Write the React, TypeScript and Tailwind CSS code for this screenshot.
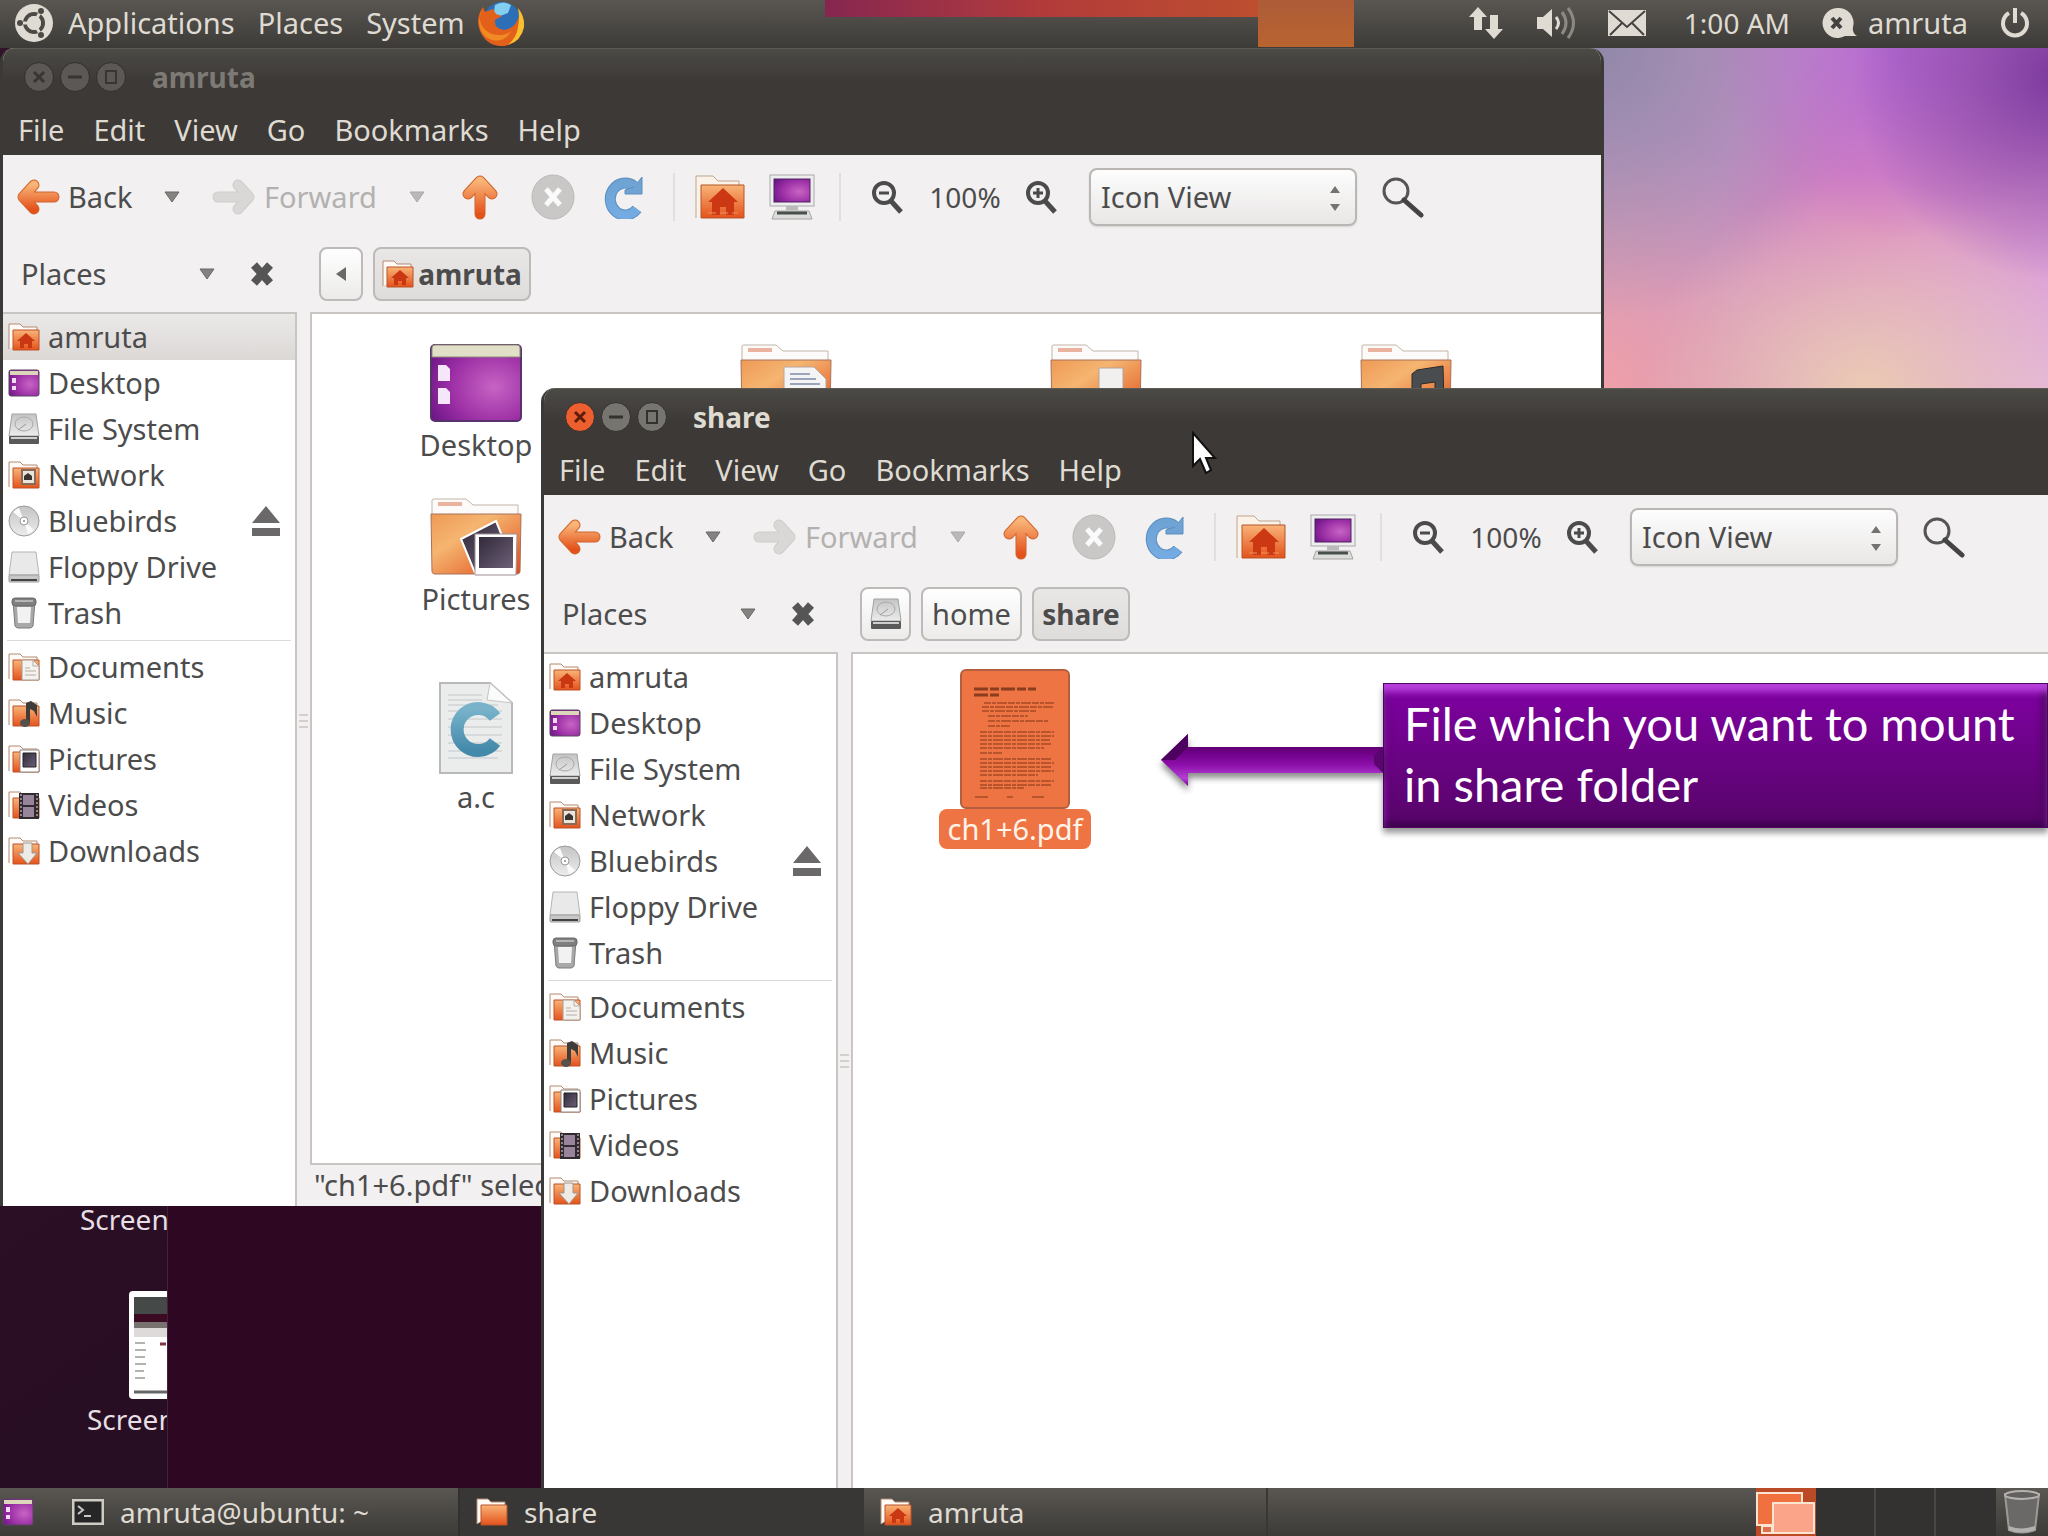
import React from 'react';

type IconProps = { className?: string };
type Emblem = 'home' | 'network' | 'document' | 'music' | 'picture' | 'video' | 'download' | 'none';

// Gradients shared by all the icons on the page
const Gradients = () => (
  <svg className="absolute h-0 w-0" aria-hidden="true">
    <defs>
      <linearGradient id="orange" x1="0" y1="0" x2="0" y2="1">
        <stop offset="0" stopColor="#f9b478" />
        <stop offset="1" stopColor="#e4521b" />
      </linearGradient>
      <linearGradient id="folder" x1="0" y1="0" x2="1" y2="1">
        <stop offset="0" stopColor="#ee9a55" />
        <stop offset="0.35" stopColor="#f5b571" />
        <stop offset="1" stopColor="#df4a17" />
      </linearGradient>
      <linearGradient id="blue" x1="0" y1="0" x2="0" y2="1">
        <stop offset="0" stopColor="#6ea3d4" />
        <stop offset="1" stopColor="#74abe2" />
      </linearGradient>
      <radialGradient id="purple" cx="0.7" cy="0.55" r="0.8">
        <stop offset="0" stopColor="#c764c4" />
        <stop offset="0.6" stopColor="#9c2fa5" />
        <stop offset="1" stopColor="#6d1687" />
      </radialGradient>
      <linearGradient id="metal" x1="0" y1="0" x2="0" y2="1">
        <stop offset="0" stopColor="#c4c4c4" />
        <stop offset="1" stopColor="#ececec" />
      </linearGradient>
      <linearGradient id="photo" x1="0" y1="0" x2="1" y2="1">
        <stop offset="0" stopColor="#322a3a" />
        <stop offset="1" stopColor="#6d6078" />
      </linearGradient>
      <linearGradient id="teal" x1="0" y1="0" x2="0" y2="1">
        <stop offset="0" stopColor="#79b3cb" />
        <stop offset="1" stopColor="#4389aa" />
      </linearGradient>
      <linearGradient id="shaft" x1="0" y1="0" x2="0" y2="1">
        <stop offset="0" stopColor="#43004f" />
        <stop offset="0.35" stopColor="#6d0085" />
        <stop offset="0.6" stopColor="#8d10ab" />
        <stop offset="0.85" stopColor="#b43fd4" />
        <stop offset="1" stopColor="#75058f" />
      </linearGradient>
    </defs>
  </svg>
);

const SmallFolder = ({ emblem }: { emblem: Emblem }) => (
  <svg viewBox="0 0 32 32" className="h-8 w-8 shrink-0">
    <path d="M1 28V3h11l3 3h14v5" fill="#fffaf5" stroke="#b08a74" />
    <path d="M5 9h26v20H5z" fill="url(#orange)" stroke="#b9532a" />
    {emblem === 'home' && <path d="M18 12l9 8h-3v7h-4v-4h-4v4h-4v-7H9z" fill="#c93713" />}
    {emblem === 'network' && (
      <>
        <path d="M14 11h13v14H14z" fill="#e9e5dc" stroke="#8b6a55" strokeWidth="2" />
        <path d="M16 21v-4l4-3 4 3v4z" fill="#38342f" />
      </>
    )}
    {emblem === 'document' && (
      <>
        <path d="M14 9h11l6 6v14H14z" fill="#f4f2ef" stroke="#a99a90" />
        <path d="M25 9v6h6M17 17h5M17 20h11M17 24h11" fill="none" stroke="#b7aaa2" />
      </>
    )}
    {emblem === 'music' && (
      <>
        <path d="M18 25V6l5-2 6 4v12l-3-6-4-2v14z" fill="#3f3d39" />
        <ellipse cx="17" cy="26" rx="5" ry="4" fill="#54524b" />
      </>
    )}
    {emblem === 'picture' && (
      <>
        <path d="M12 7h19v22H12z" fill="#fff" stroke="#8e8580" />
        <path d="M15 10h13v14H15z" fill="url(#photo)" stroke="#222" />
      </>
    )}
    {emblem === 'video' && (
      <>
        <path d="M11 4h20v26H11z" fill="#332a30" />
        <path d="M15 6h11v10H15zM15 18h11v10H15z" fill="#98859c" />
        <path d="M13 5v24M29 5v24" stroke="#8f858d" strokeWidth="2" strokeDasharray="2 2" />
      </>
    )}
    {emblem === 'download' && (
      <path d="M15 8h9v10h5l-9 11-10-11h5z" fill="#eeebe6" stroke="#a0968c" />
    )}
  </svg>
);

const DesktopIcon = () => (
  <svg viewBox="0 0 32 32" className="h-8 w-8 shrink-0">
    <rect x="1" y="3" width="30" height="26" rx="2" fill="url(#purple)" stroke="#5a4560" />
    <path d="M2 4h28v4H2z" fill="#dcd6ba" />
    <path d="M4 11h4v5H4zM4 19h4v4H4z" fill="#f2daf5" />
  </svg>
);

const DriveIcon = () => (
  <svg viewBox="0 0 32 32" className="h-8 w-8 shrink-0">
    <path d="M4 1h24l3 22H1z" fill="url(#metal)" stroke="#a2a2a2" />
    <ellipse cx="16" cy="11" rx="9" ry="7" fill="none" stroke="#a8a8a8" />
    <path d="M10 17l8-6" stroke="#999" />
    <rect x="1" y="23" width="30" height="8" rx="1" fill="#5a5a5a" />
    <path d="M3 25h26" stroke="#cfcfcf" strokeWidth="2" />
  </svg>
);

const FloppyIcon = () => (
  <svg viewBox="0 0 32 32" className="h-8 w-8 shrink-0">
    <path d="M4 1h24l3 23H1z" fill="#e9e9e9" stroke="#b5b5b5" />
    <rect x="1" y="24" width="30" height="7" rx="1" fill="#c7c7c7" stroke="#9c9c9c" />
    <path d="M3 29h26" stroke="#444" strokeWidth="2" />
  </svg>
);

const DiscIcon = () => (
  <svg viewBox="0 0 32 32" className="h-8 w-8 shrink-0">
    <circle cx="16" cy="16" r="15" fill="url(#metal)" stroke="#9b9b9b" />
    <path d="M16 16L5 7a14 14 0 0 1 6-4zM16 16l10 9a14 14 0 0 1-6 4z" fill="#fafafa" />
    <circle cx="16" cy="16" r="4" fill="#fff" stroke="#999" />
    <circle cx="16" cy="16" r="1" fill="#888" />
  </svg>
);

const TrashIcon = ({ className = 'h-8 w-8 shrink-0' }: IconProps) => (
  <svg viewBox="0 0 32 32" className={className}>
    <path d="M5 4h22l-2 25a4 3 0 0 1-3 2H10a4 3 0 0 1-3-2z" fill="#a8a8a8" stroke="#7c7c7c" />
    <path d="M9 10h14l-1 16H10z" fill="#f2f2f2" />
    <rect x="4" y="1" width="24" height="8" rx="3" fill="#7f7f7f" stroke="#6b6b6b" />
    <path d="M7 4h18" stroke="#b5b5b5" strokeWidth="2" />
  </svg>
);

const BigFolder = ({ emblem }: { emblem: Emblem }) => (
  <svg viewBox="0 0 92 78" className="h-[78px] w-[92px]">
    <path d="M2 20V2a2 2 0 0 1 2-1h32l7 6h45v14" fill="#fdfbf9" stroke="#c3b4a8" />
    <path d="M8 6h24" stroke="#eab3a0" strokeWidth="4" />
    <path d="M1 16h90l-1 58a3 3 0 0 1-3 2H5a3 3 0 0 1-3-2z" fill="url(#folder)" stroke="#a9725a" />
    {emblem === 'picture' && (
      <>
        <path d="M31 41l35-18 9 22-30 30z" fill="url(#photo)" stroke="#fff" strokeWidth="2" />
        <path d="M45 36h42l-1 41H45z" fill="#fff" stroke="#9b8f96" />
        <path d="M49 39h34v31H49z" fill="url(#photo)" />
      </>
    )}
    {emblem === 'document' && (
      <>
        <path d="M44 23h30l12 12v40H44z" fill="#f5f4f5" stroke="#b7a6a0" />
        <path d="M50 30h20M50 35h26M50 40h30M50 45h30" stroke="#9aa5ba" strokeWidth="2" />
      </>
    )}
    {emblem === 'download' && <path d="M49 24h24v24h12L61 72 37 48h12z" fill="#f2f0ee" stroke="#b1a49c" />}
    {emblem === 'music' && (
      <path d="M52 66V30l5-4 26-4 1 38-9 2V38l-14 2v26z" fill="#4a4d50" stroke="#2c2a28" />
    )}
  </svg>
);

const BigDesktop = () => (
  <svg viewBox="0 0 92 78" className="h-[78px] w-[92px]">
    <rect x="1" y="1" width="90" height="76" rx="4" fill="url(#purple)" stroke="#56336b" strokeWidth="2" />
    <path d="M2 4a3 3 0 0 1 3-3h82a3 3 0 0 1 3 3v9H2z" fill="#e2dfc8" stroke="#8d8a78" />
    <path d="M8 21h8l4 4v12H8zM8 44h8l4 4v12H8z" fill="#f6e6fa" />
  </svg>
);

const SourceFile = () => (
  <svg viewBox="0 0 74 92" className="h-[92px] w-[74px]">
    <path d="M1 1h50l22 20v70H1z" fill="#ebecec" stroke="#b9b9b9" strokeWidth="2" />
    <path d="M51 1l-3 17 25 3z" fill="#fbfbfb" stroke="#c5c5c5" />
    <path d="M9 13h34M9 18h34M9 23h50M9 29h54M9 37h54M9 45h54M9 53h54M9 61h54M9 69h54M9 76h50" stroke="#c3c8ca" />
    <path d="M56 35A21 21 0 1 0 56 60" fill="none" stroke="url(#teal)" strokeWidth="13" />
  </svg>
);

const PdfPreview = () => (
  <svg viewBox="0 0 110 140" className="h-[140px] w-[110px]">
    <rect x="1" y="1" width="108" height="138" rx="5" fill="#ef7443" stroke="#b35f3e" strokeWidth="2" />
    <path d="M14 20h62M14 26h27" stroke="#8a3d1f" strokeWidth="3" strokeDasharray="14 2 9 2" />
    <path
      d="M24 34h70M22 38h72M22 42h54M28 47h40M28 52h60M28 57h22M20 63h74M20 67h74M20 71h70M20 75h72M20 79h64M20 84h22M20 90h72M20 94h74M20 98h72M20 102h74M20 106h58M20 112h74M20 116h72M20 119h44"
      stroke="#b9552c"
      strokeWidth="2"
      strokeDasharray="7 1 4 1 10 1"
    />
    <path d="M15 128h13M47 128h6M72 128h12" stroke="#b9552c" strokeWidth="2" />
  </svg>
);

const Arrow = ({ direction, disabled }: { direction: 'left' | 'right'; disabled?: boolean }) => {
  const d = direction === 'left' ? 'M18 7L7 19l11 12M7 19h31' : 'M26 7l11 12-11 12M37 19H6';
  return (
    <svg viewBox="0 0 44 38" className="h-[38px] w-11 shrink-0">
      <g fill="none" strokeLinecap="round" strokeLinejoin="round">
        <path d={d} stroke={disabled ? '#cfcdcb' : '#d0652c'} strokeWidth="11" />
        <path d={d} stroke={disabled ? '#dad8d6' : 'url(#orange)'} strokeWidth="9" />
      </g>
    </svg>
  );
};

const UpArrow = () => (
  <svg viewBox="0 0 38 46" className="h-[46px] w-[38px]">
    <g fill="none" strokeLinecap="round" strokeLinejoin="round">
      <path d="M7 20L19 7l12 13M19 7v33" stroke="#d0652c" strokeWidth="11" />
      <path d="M7 20L19 7l12 13M19 7v33" stroke="url(#orange)" strokeWidth="9" />
    </g>
  </svg>
);

const StopIcon = () => (
  <svg viewBox="0 0 44 46" className="h-[46px] w-11">
    <ellipse cx="22" cy="23" rx="21" ry="22" fill="#c9c8c7" stroke="#bab9b8" />
    <path d="M15 15l14 16M29 15L15 31" stroke="#fafafa" strokeWidth="5" />
  </svg>
);

const ReloadIcon = () => (
  <svg viewBox="0 0 42 44" className="h-11 w-[42px]">
    <path d="M34 34A15 16 0 1 1 31 11" fill="none" stroke="#5a8fc0" strokeWidth="11" />
    <path d="M34 34A15 16 0 1 1 31 11" fill="none" stroke="url(#blue)" strokeWidth="9" />
    <path d="M39 2v17H22v-4l9-3z" fill="#6ea3d4" stroke="#5a8fc0" />
  </svg>
);

const HomeFolder = () => (
  <svg viewBox="0 0 50 46" className="h-[46px] w-[50px]">
    <path d="M1 44V2h17l5 5h21v6" fill="#fbf3ea" stroke="#c0a58e" />
    <path d="M6 11h43v33H6z" fill="url(#orange)" stroke="#b5542b" />
    <path d="M28 14l15 14h-4v13h-8v-8h-6v8h-8V28h-4z" fill="#cc3814" />
    <path d="M13 39h30" stroke="#eb9160" strokeDasharray="8 4" />
  </svg>
);

const ComputerIcon = () => (
  <svg viewBox="0 0 46 46" className="h-[46px] w-[46px]">
    <rect x="1" y="1" width="44" height="31" fill="#eee" stroke="#a9a9a9" />
    <rect x="5" y="5" width="36" height="23" fill="url(#purple)" stroke="#4c2260" />
    <path d="M17 32h12v4H17z" fill="#bababa" />
    <path d="M6 37h34l3 8H3z" fill="#dcdcda" stroke="#a5a5a3" />
    <path d="M8 39h30" stroke="#47504b" strokeWidth="3" />
  </svg>
);

const ZoomIcon = ({ plus }: { plus?: boolean }) => (
  <svg viewBox="0 0 34 34" className="h-[34px] w-[34px]">
    <circle cx="13" cy="13" r="10" fill="none" stroke="#4b4b4b" strokeWidth="4" />
    <path d="M20 21l10 11" stroke="#4b4b4b" strokeWidth="5" />
    <path d={plus ? 'M8 13h10M13 8v10' : 'M8 13h10'} stroke="#4b4b4b" strokeWidth="3" />
  </svg>
);

const SearchIcon = () => (
  <svg viewBox="0 0 44 42" className="h-[42px] w-11">
    <circle cx="15" cy="15" r="12" fill="none" stroke="#555" strokeWidth="3" />
    <path d="M23 24l17 15" stroke="#444" strokeWidth="5" strokeLinecap="round" />
  </svg>
);

const Triangle = ({ faded }: { faded?: boolean }) => (
  <svg viewBox="0 0 16 12" className="h-3 w-4">
    <path d="M1 1h14L8 11z" fill={faded ? '#bbb9b7' : '#858381'} stroke={faded ? '#aaa' : '#6b6967'} />
  </svg>
);

const CloseX = () => (
  <svg viewBox="0 0 26 26" className="h-[26px] w-[26px]">
    <path d="M5 4l16 18M21 4L5 22" stroke="#555" strokeWidth="8" />
  </svg>
);

const EjectIcon = () => (
  <svg viewBox="0 0 28 32" className="h-8 w-7">
    <path d="M14 1l14 17H0zM0 23h28v8H0z" fill="#6a6868" />
  </svg>
);

const UbuntuLogo = () => (
  <svg viewBox="0 0 40 40" className="h-10 w-10 shrink-0">
    <circle cx="20" cy="20" r="19" fill="#dfdbd2" />
    <circle cx="20" cy="20" r="9" fill="none" stroke="#4b4a46" strokeWidth="4" />
    <path d="M20 20H4M20 20l8-14M20 20l8 14" stroke="#dfdbd2" strokeWidth="3" />
    <circle cx="20" cy="20" r="7" fill="#dfdbd2" />
    <circle cx="6" cy="20" r="3" fill="#4b4a46" />
    <circle cx="27" cy="8" r="3" fill="#4b4a46" />
    <circle cx="27" cy="32" r="3" fill="#4b4a46" />
  </svg>
);

const FirefoxLogo = () => (
  <svg viewBox="0 0 48 46" className="h-[46px] w-12 shrink-0">
    <circle cx="25" cy="21" r="19" fill="#2d6fb6" />
    <path d="M18 5q8-5 16 0l-3 8-8 3-7 2z" fill="#83cdef" />
    <path d="M41 8q7 9 6 19-3 16-20 19-17 1-24-15-5-13 3-24l2 5 8-3 3 5 6 2-7 4q-1 9 9 10 9-1 13-9 4-6 1-13z" fill="#e3601b" />
    <path d="M41 8q7 9 6 19-3 14-16 18 9-8 10-18 2-9 0-19z" fill="#f7c030" />
    <path d="M4 10q-3 9 1 16 6 9 17 9 8 0 12-4-6 12-19 9Q3 36 2 22z" fill="#f08a24" />
  </svg>
);

const Callout = () => (
  <div className="absolute top-[635px] right-0 left-[1161px] flex items-start">
    <svg viewBox="0 0 222 60" className="mt-[49px] h-[60px] w-[222px] shrink-0 drop-shadow-[0_5px_3px_rgba(0,0,0,0.45)]">
      <path d="M0 28L27 2v13h195v26H27v13z" fill="url(#shaft)" />
      <path d="M0 28L27 2v13L14 28z" fill="#4d0060" />
      <path d="M222 15v26l-9-9v-9z" fill="#5b0571" />
    </svg>
    <p className="min-w-0 flex-1 border border-[#4f0462] bg-linear-to-b from-[#8000a3] to-[#560468] px-5 pt-[9px] pb-[12px] font-[Lato,sans-serif] text-[47px] leading-[61px] text-white shadow-[inset_0_10px_7px_-2px_#b740dc,inset_0_-8px_6px_-3px_#3f0450,inset_-8px_0_6px_-3px_#4d0861,inset_6px_0_6px_-3px_#6b0a85,0_5px_6px_rgba(0,0,0,0.4)]">
      File which you want to mount
      <br />
      in share folder
    </p>
  </div>
);

const places: { label: string; icon: React.ReactNode; eject?: boolean }[] = [
  { label: 'amruta', icon: <SmallFolder emblem="home" /> },
  { label: 'Desktop', icon: <DesktopIcon /> },
  { label: 'File System', icon: <DriveIcon /> },
  { label: 'Network', icon: <SmallFolder emblem="network" /> },
  { label: 'Bluebirds', icon: <DiscIcon />, eject: true },
  { label: 'Floppy Drive', icon: <FloppyIcon /> },
  { label: 'Trash', icon: <TrashIcon /> },
];

const bookmarks: { label: string; emblem: Emblem }[] = [
  { label: 'Documents', emblem: 'document' },
  { label: 'Music', emblem: 'music' },
  { label: 'Pictures', emblem: 'picture' },
  { label: 'Videos', emblem: 'video' },
  { label: 'Downloads', emblem: 'download' },
];

const menus = ['File', 'Edit', 'View', 'Go', 'Bookmarks', 'Help'];

const TitleBar = ({ title, active }: { title: string; active?: boolean }) => {
  const button = active ? 'bg-[#777570] text-[#33322f]' : 'bg-[#5b5855] text-[#383533]';
  return (
    <div className="flex h-14 items-center gap-[6px] pl-[21px]">
      <button
        aria-label="Close"
        className={`h-[30px] w-[30px] rounded-full border border-[#33302e] ${active ? 'bg-[#ee5f30] text-[#5c1e0b]' : button}`}
      >
        <svg viewBox="0 0 28 28"><path d="M9 9l10 10M19 9L9 19" stroke="currentColor" strokeWidth="3" /></svg>
      </button>
      <button aria-label="Minimize" className={`h-[30px] w-[30px] rounded-full border border-[#33302e] ${button}`}>
        <svg viewBox="0 0 28 28"><path d="M7 14h14" stroke="currentColor" strokeWidth="3" /></svg>
      </button>
      <button aria-label="Maximize" className={`h-[30px] w-[30px] rounded-full border border-[#33302e] ${button}`}>
        <svg viewBox="0 0 28 28"><path d="M9 8h10v12H9z" fill="none" stroke="currentColor" strokeWidth="2" /></svg>
      </button>
      <h2 className={`pl-5 text-[28px] font-bold ${active ? 'text-[#dfdbd2]' : 'text-[#7d7a75]'}`}>{title}</h2>
    </div>
  );
};

const Toolbar = ({ id }: { id: string }) => (
  <div className="flex h-[84px] shrink-0 items-center text-[29px] text-[#4c4c4c]">
    <button className="ml-[13px] flex w-[118px] items-center gap-2">
      <Arrow direction="left" />
      Back
    </button>
    <button aria-label="Back history" className="ml-[30px]"><Triangle /></button>
    <button disabled className="ml-8 flex w-[170px] items-center gap-2 text-[#b3b1b0]">
      <Arrow direction="right" disabled />
      Forward
    </button>
    <button disabled aria-label="Forward history" className="ml-[27px]"><Triangle faded /></button>
    <button aria-label="Up" className="ml-9"><UpArrow /></button>
    <button disabled aria-label="Stop" className="ml-8"><StopIcon /></button>
    <button aria-label="Reload" className="ml-7"><ReloadIcon /></button>
    <span className="ml-7 h-12 w-[2px] bg-[#e2dfdd]" />
    <button aria-label="Home" className="ml-5"><HomeFolder /></button>
    <button aria-label="Computer" className="ml-6"><ComputerIcon /></button>
    <span className="ml-6 h-12 w-[2px] bg-[#e2dfdd]" />
    <button aria-label="Zoom out" className="ml-[30px]"><ZoomIcon /></button>
    <button className="w-[120px] text-center text-[28px]">100%</button>
    <button aria-label="Zoom in"><ZoomIcon plus /></button>
    <div className="relative ml-[30px] w-[268px]">
      <select
        id={id}
        aria-label="View as"
        className="h-[58px] w-full appearance-none rounded-[8px] border-2 border-[#b9b6b3] bg-linear-to-b from-[#fdfdfd] to-[#e9e7e6] pl-[10px] shadow-[0_1px_2px_rgba(0,0,0,0.12)]"
      >
        <option>Icon View</option>
      </select>
      <svg viewBox="0 0 12 28" className="pointer-events-none absolute top-4 right-4 h-7 w-3">
        <path d="M6 2l5 7H1zM6 27l5-7H1z" fill="#757270" />
      </svg>
    </div>
    <button aria-label="Search" className="ml-6"><SearchIcon /></button>
  </div>
);

const PlaceRow = ({ icon, label, selected, eject }: { icon: React.ReactNode; label: string; selected?: boolean; eject?: boolean }) => (
  <li className={`flex h-[46px] items-center pr-[15px] pl-[5px] ${selected ? 'bg-linear-to-b from-[#ebe9e8] to-[#dbd8d6]' : ''}`}>
    <button className="flex flex-1 items-center gap-2 text-left leading-[46px]">
      {icon}
      {label}
    </button>
    {eject && <button aria-label={`Eject ${label}`}><EjectIcon /></button>}
  </li>
);

const FileWindow = ({
  title,
  active,
  selected,
  path,
  status,
  className,
  children,
}: {
  title: string;
  active?: boolean;
  selected?: string;
  path: React.ReactNode;
  status?: string;
  className: string;
  children: React.ReactNode;
}) => (
  <section className={`absolute flex flex-col overflow-hidden border-l-[3px] border-[#3c3a38] bg-[#f2f0f0] ${className}`}>
    <header className="h-[107px] shrink-0 border-t border-[#5a5954] bg-linear-to-b from-[#4b4a45] via-[#3d3937] via-30% to-[#3d3937]">
      <TitleBar title={title} active={active} />
      <nav className="flex h-[50px] items-center gap-[29px] pl-[15px] text-[29px] text-[#dfdbd2]">
        {menus.map((menu) => (
          <button key={menu}>{menu}</button>
        ))}
      </nav>
    </header>

    <Toolbar id={`view-${title}`} />

    {/* Side pane header and path bar */}
    <div className="flex h-[73px] shrink-0 items-center pb-1 text-[29px] text-[#4c4c4c]">
      <div className="flex w-[294px] items-center pr-[22px] pl-[18px]">
        <span className="flex-1">Places</span>
        <button aria-label="Choose side pane"><Triangle /></button>
        <button aria-label="Close side pane" className="ml-[34px]"><CloseX /></button>
      </div>
      <div className="ml-[22px] flex gap-[10px]">{path}</div>
    </div>

    <div className="flex min-h-0 flex-1 text-[29px] text-[#4c4c4c]">
      <aside className="w-[294px] shrink-0 border-t-2 border-r-2 border-[#c9c5c3] bg-white">
        <ul>
          {places.map((place) => (
            <PlaceRow key={place.label} {...place} selected={place.label === selected} />
          ))}
        </ul>
        <hr className="mx-1 mt-1 mb-[3px] border-[#dddbda]" />
        <ul>
          {bookmarks.map((item) => (
            <PlaceRow key={item.label} label={item.label} icon={<SmallFolder emblem={item.emblem} />} />
          ))}
        </ul>
      </aside>
      <div className="flex w-[13px] shrink-0 flex-col items-center gap-1 pt-[402px]">
        <span className="h-[2px] w-[9px] bg-[#d2cfcd]" />
        <span className="h-[2px] w-[9px] bg-[#d2cfcd]" />
        <span className="h-[2px] w-[9px] bg-[#d2cfcd]" />
      </div>
      <div className="flex min-w-0 flex-1 flex-col">
        <div className="relative min-h-0 flex-1 border-t-2 border-l-2 border-[#c9c5c3] bg-white">{children}</div>
        {status && <p className="h-[43px] shrink-0 border-t-2 border-[#c9c5c3] pl-1 leading-[40px]">{status}</p>}
      </div>
    </div>
  </section>
);

const pathButton = 'flex h-[54px] items-center justify-center rounded-[8px] border-2 border-[#bdbab7]';

const FileItem = ({ icon, label }: { icon: React.ReactNode; label?: string }) => (
  <figure className="flex flex-col items-center justify-end">
    {icon}
    <figcaption className="h-11 pt-[2px] leading-[42px]">{label}</figcaption>
  </figure>
);

const TopPanel = () => (
  <header className="relative flex h-12 shrink-0 items-center bg-linear-to-b from-[#5a5753] to-[#3d3b37] pb-[2px] text-[29px] text-[#dfdbd2]">
    {/* Strip of wallpaper showing over the panel */}
    <div className="absolute top-0 left-[825px] flex">
      <span className="h-[17px] w-[433px] bg-linear-to-r from-[#86264f] via-[#b23b3a] to-[#bd4e2e]" />
      <span className="h-[47px] w-[96px] bg-linear-to-b from-[#ad5c38] to-[#b9632f]" />
    </div>
    <nav className="flex items-center">
      <button className="ml-[14px] flex items-center gap-[14px]">
        <UbuntuLogo />
        Applications
      </button>
      <button className="ml-[23px]">Places</button>
      <button className="ml-[23px]">System</button>
      <button aria-label="Firefox" className="ml-3"><FirefoxLogo /></button>
    </nav>
    <div className="ml-auto flex items-center pr-[18px]">
      <button aria-label="Network" className="mr-8">
        <svg viewBox="0 0 36 34" className="h-[34px] w-9">
          <path d="M10 1l9 10h-5v13H6V11H1zM26 33l9-10h-5V9h-8v14h-5z" fill="#dfdbd2" />
        </svg>
      </button>
      <button aria-label="Volume" className="mr-8">
        <svg viewBox="0 0 40 34" className="h-[34px] w-10">
          <path d="M1 11h6l9-8v28l-9-8H1z" fill="#dfdbd2" />
          <path d="M20 11q5 6 0 12" fill="none" stroke="#dfdbd2" strokeWidth="3" />
          <path d="M26 6q8 11 0 22M32 2q11 15 0 30" fill="none" stroke="#8c8983" strokeWidth="3" />
        </svg>
      </button>
      <button aria-label="Mail" className="mr-[38px]">
        <svg viewBox="0 0 38 26" className="h-[26px] w-[38px]">
          <path d="M0 0h38v26H0z" fill="#dfdbd2" />
          <path d="M1 1l18 16L37 1M2 25l12-12M36 25L24 13" fill="none" stroke="#45433f" strokeWidth="2" />
        </svg>
      </button>
      <time className="mr-8 text-[28px]">1:00 AM</time>
      <button className="mr-8 flex items-center gap-[10px]">
        <svg viewBox="0 0 36 32" className="h-8 w-9">
          <path d="M15 1a15 15 0 1 0 8 28h12q-5-3-4-9A15 15 0 0 0 15 1z" fill="#dfdbd2" />
          <path d="M10 11l9 10M19 11l-9 10" stroke="#45433f" strokeWidth="4" />
        </svg>
        amruta
      </button>
      <button aria-label="Shut down">
        <svg viewBox="0 0 30 32" className="h-8 w-[30px]">
          <path d="M9 6a12 12 0 1 0 12 0M15 1v15" fill="none" stroke="#dfdbd2" strokeWidth="4" />
        </svg>
      </button>
    </div>
  </header>
);

const Taskbar = () => (
  <footer className="flex h-12 shrink-0 items-center bg-linear-to-b from-[#5a5753] to-[#3d3b37] text-[28px] text-[#dfdbd2]">
    <button aria-label="Show desktop" className="ml-[2px]"><DesktopIcon /></button>
    <button className="ml-[22px] flex h-full w-[404px] items-center gap-4 border-r-2 border-[#33312f] pl-4">
      <svg viewBox="0 0 32 26" className="h-[26px] w-8">
        <path d="M1 1h30v24H1z" fill="#262626" stroke="#cfccc6" strokeWidth="3" />
        <path d="M6 7l5 4-5 4M12 17h7" fill="none" stroke="#c8c8c8" strokeWidth="2" />
      </svg>
      amruta@ubuntu: ~
    </button>
    <button className="flex h-full w-[404px] items-center gap-4 bg-[#383735] pl-4">
      <SmallFolder emblem="none" />
      share
    </button>
    <button className="flex h-full w-[404px] items-center gap-4 border-r-2 border-[#393734] pl-4">
      <SmallFolder emblem="home" />
      amruta
    </button>
    <div className="ml-auto flex h-full">
      <button aria-label="Workspace 1" className="w-[60px] bg-[#bb4a26]">
        <svg viewBox="0 0 60 48" className="h-12 w-[60px]">
          <path d="M1 5h45v32H1z" fill="#f0703f" stroke="#fbe5d2" strokeWidth="2" />
          <path d="M6 38h10v7H6z" fill="#e0704c" stroke="#fbe5d2" strokeWidth="2" />
          <path d="M17 15h41v30H17z" fill="#fba48a" stroke="#fbe5d2" strokeWidth="2" />
        </svg>
      </button>
      <button aria-label="Workspace 2" className="w-[60px] border-r-2 border-[#4a4846] bg-[#343231]" />
      <button aria-label="Workspace 3" className="w-[60px] border-r-2 border-[#4a4846] bg-[#343231]" />
      <button aria-label="Workspace 4" className="w-[60px] bg-[#343231]" />
    </div>
    <button aria-label="Trash" className="px-[6px]">
      <svg viewBox="0 0 40 46" className="h-[46px] w-10">
        <path d="M3 5h34l-4 36q-13 5-26 0z" fill="#6b6967" stroke="#9c9a98" strokeWidth="2" />
        <path d="M7 37q13 5 26 0v4q-13 5-26 0z" fill="#b3b1af" />
        <ellipse cx="20" cy="6" rx="17" ry="4" fill="#63615f" stroke="#b5b3b0" strokeWidth="2" />
      </svg>
    </button>
  </footer>
);

const App = () => {
  return (
    <div className="flex h-screen flex-col overflow-hidden font-['Noto_Sans','Open_Sans',sans-serif]">
      <Gradients />
      <TopPanel />

      <main className="relative min-h-0 flex-1 overflow-hidden bg-linear-to-br from-[#34122b] to-[#1d0a1b]">
        {/* Bright corner of the wallpaper */}
        <div className="absolute top-0 right-0 left-[1590px] h-[350px] bg-[radial-gradient(circle_at_102%_8%,#7c3a9e_0%,transparent_36%),radial-gradient(circle_at_68%_2%,#b56ad2_0%,transparent_40%),radial-gradient(circle_at_2%_0%,#9188a8_0%,transparent_48%),radial-gradient(circle_at_60%_100%,#eccbb2_0%,transparent_50%),radial-gradient(circle_at_0%_100%,#f2a0a6_0%,transparent_48%),radial-gradient(circle_at_100%_100%,#e4b6dc_0%,transparent_60%),radial-gradient(circle_at_65%_48%,#d874b4_0%,transparent_50%),linear-gradient(to_right,#c49ac8,#cf80cc)]" />

        {/* Desktop files, cut off by the terminal */}
        <div className="absolute bottom-0 left-0 flex h-[290px] w-[167px] flex-col overflow-hidden text-[28px] leading-[38px] text-[#e6dfe4]">
          <span className="pt-[2px] pl-[80px]">Screenshot</span>
          <svg viewBox="0 0 60 110" className="mt-[52px] ml-[128px] h-[110px] w-[60px] shrink-0">
            <rect x="1" y="1" width="70" height="108" rx="4" fill="#fff" />
            <path d="M6 7h54v17H6z" fill="#454a48" />
            <path d="M6 24h54v8H6z" fill="#3a0b22" />
            <path d="M6 32h54v6H6z" fill="#77716f" />
            <path d="M6 38h54v9H6z" fill="#dedada" />
            <path d="M7 53h10M7 60h11M7 67h10M7 74h11M7 81h9M7 88h10" stroke="#b7b2b2" strokeWidth="2" />
            <path d="M32 54h6" stroke="#7c3a44" strokeWidth="3" />
            <path d="M6 102h54" stroke="#666" strokeWidth="3" />
          </svg>
          <span className="pl-[87px]">Screenshot</span>
        </div>
        <div className="absolute bottom-0 left-[167px] h-[290px] w-[380px] border-l border-[#45203a] bg-[#2e0722]" />

        <FileWindow
          title="amruta"
          selected="amruta"
          status={'"ch1+6.pdf" selected'}
          className="top-0 left-0 h-[1158px] w-[1604px] rounded-t-[14px] border-r-[3px]"
          path={
            <>
              <button aria-label="Scroll path left" className={`${pathButton} w-11 bg-linear-to-b from-white to-[#ecebea]`}>
                <svg viewBox="0 0 12 16" className="h-4 w-3"><path d="M11 1v14L1 8z" fill="#6b6967" /></svg>
              </button>
              <button className={`${pathButton} w-[158px] gap-1 bg-linear-to-b from-[#e9e7e6] to-[#dfdddb] text-[28px] font-bold`}>
                <SmallFolder emblem="home" />
                amruta
              </button>
            </>
          }
        >
          <div className="grid grid-cols-[repeat(4,310px)] grid-rows-[152px_154px_198px] pl-[9px]">
            <FileItem icon={<BigDesktop />} label="Desktop" />
            <FileItem icon={<BigFolder emblem="document" />} />
            <FileItem icon={<BigFolder emblem="download" />} />
            <FileItem icon={<BigFolder emblem="music" />} />
            <FileItem icon={<BigFolder emblem="picture" />} label="Pictures" />
            <span className="col-span-3" />
            <FileItem icon={<SourceFile />} label="a.c" />
          </div>
        </FileWindow>

        <FileWindow
          title="share"
          active
          className="top-[340px] right-0 bottom-0 left-[541px] rounded-tl-[14px]"
          path={
            <>
              <button aria-label="File System" className={`${pathButton} w-[51px] bg-linear-to-b from-white to-[#ecebea]`}>
                <DriveIcon />
              </button>
              <button className={`${pathButton} w-[101px] bg-linear-to-b from-white to-[#ecebea]`}>home</button>
              <button className={`${pathButton} w-[98px] bg-linear-to-b from-[#e9e7e6] to-[#dfdddb] text-[28px] font-bold`}>share</button>
            </>
          }
        >
          <figure className="flex w-[324px] flex-col items-center pt-[15px]">
            <PdfPreview />
            <figcaption className="rounded-[8px] bg-[#ef7443] px-2 leading-[40px] text-[#fff3ea]">ch1+6.pdf</figcaption>
          </figure>
        </FileWindow>

        {/* Note pointing at the selected file */}
        <Callout />

        <svg viewBox="0 0 26 44" className="absolute top-[383px] left-[1191px] h-11 w-[26px]">
          <path d="M2 2v33l7-7 6 14 5-3-5-12h9z" fill="#fff" stroke="#111" strokeWidth="2" />
        </svg>
      </main>

      <Taskbar />
    </div>
  );
};

export default App;
